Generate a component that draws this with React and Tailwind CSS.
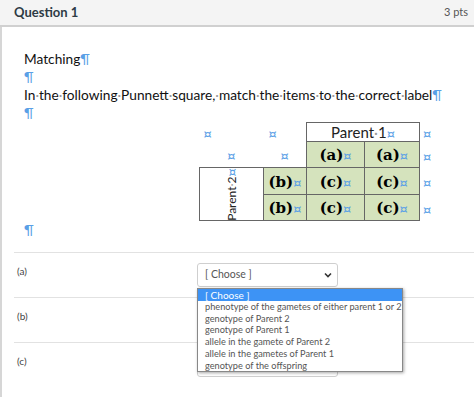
import React from 'react';

const mark = 'text-[#5aa0e6]';

function Dotted({ text }) {
    // Word formatting marks: spaces shown as middle dots
    const parts = text.split(' ');
    return (
        <>
            {parts.map((p, i) => (
                <React.Fragment key={i}>
                    {p}
                    {i < parts.length - 1 && <span className="text-[#999]">·</span>}
                </React.Fragment>
            ))}
        </>
    );
}

function Cur() {
    return <span className={`${mark} text-[13px] font-normal font-['DejaVu_Sans',sans-serif]`}>¤</span>;
}

function Label({ t }) {
    return (
        <span className="font-['DejaVu_Serif',serif] font-bold text-[15px] text-black">
            ({t})<Cur />
        </span>
    );
}

function Punnett() {
    const green = 'bg-[#d5e3bd] border border-[#666] text-center align-middle p-0';
    return (
        <div className="flex ml-[197px] leading-none">
            <table className="border-collapse table-fixed" style={{ width: 234 }}>
                <colgroup>
                    <col className="w-[64px]" />
                    <col className="w-[43px]" />
                    <col className="w-[58px]" />
                    <col className="w-[55px]" />
                    <col className="w-[14px]" />
                </colgroup>
                <tbody>
                    <tr className="h-[19px]">
                        <td className="pl-[4px] align-middle p-0"><Cur /></td>
                        <td className="pl-[5px] align-middle p-0"><Cur /></td>
                        <td colSpan={2} className="border border-[#666] text-center align-middle p-0 text-[15px] font-['Lato',sans-serif] text-[#222]">
                            Parent<span className="text-[#999]">·</span>1<Cur />
                        </td>
                        <td className="pl-[3px] p-0"><Cur /></td>
                    </tr>
                    <tr className="h-[26px]">
                        <td className="text-center p-0"><Cur /></td>
                        <td className="text-center p-0"><Cur /></td>
                        <td className={green}><Label t="a" /></td>
                        <td className={green}><Label t="a" /></td>
                        <td className="pl-[3px] p-0"><Cur /></td>
                    </tr>
                    <tr className="h-[27px]">
                        <td rowSpan={2} className="border border-[#666] bg-white p-0">
                            <div className="h-[52px] flex items-center justify-center">
                                <span className="-rotate-90 whitespace-nowrap text-[12px] font-['Lato',sans-serif] text-[#222]">
                                    Parent<span className="text-[#999]">·</span>2<Cur />
                                </span>
                            </div>
                        </td>
                        <td className={green}><Label t="b" /></td>
                        <td className={green}><Label t="c" /></td>
                        <td className={green}><Label t="c" /></td>
                        <td className="pl-[3px] p-0"><Cur /></td>
                    </tr>
                    <tr className="h-[26px]">
                        <td className={green}><Label t="b" /></td>
                        <td className={green}><Label t="c" /></td>
                        <td className={green}><Label t="c" /></td>
                        <td className="pl-[3px] p-0"><Cur /></td>
                    </tr>
                </tbody>
            </table>
        </div>
    );
}

const options = [
    'phenotype of the gametes of either parent 1 or 2',
    'genotype of Parent 2',
    'genotype of Parent 1',
    'allele in the gamete of Parent 2',
    'allele in the gametes of Parent 1',
    'genotype of the offspring',
];

function SelectBox() {
    return (
        <div className="w-[141px] h-[24px] border border-[#cfcfcf] rounded-[3px] bg-white flex items-center justify-between pl-[7px] pr-[5px] text-[10.5px] text-[#555]">
            <span>[ Choose ]</span>
            <svg width="8" height="6" viewBox="0 0 8 6">
                <path d="M1 1.5 L4 4.5 L7 1.5" fill="none" stroke="#333" strokeWidth="1.6" />
            </svg>
        </div>
    );
}

function AnswerRow({ label, open }) {
    return (
        <div className="border-t border-[#e2e2e2] h-[45px] flex">
            <div className="w-[183px] pl-[3px] pt-[11px] text-[10px] text-[#444]">{label}</div>
            <div className="relative pt-[10px]">
                <SelectBox />
                {open && (
                    <div className="absolute left-0 top-[35px] w-[206px] bg-white border border-[#888] shadow-[1px_1px_3px_rgba(0,0,0,0.35)] z-10 text-[9.2px] leading-[11.7px] text-[#555]">
                        <div className="bg-[#3d93f5] text-white pl-[7px] h-[12px] text-[10px] leading-[12px]">[ Choose ]</div>
                        {options.map(o => (
                            <div key={o} className="pl-[7px] whitespace-nowrap">{o}</div>
                        ))}
                    </div>
                )}
            </div>
        </div>
    );
}

export default function App() {
    return (
        <div className="w-[474px] h-[399px] overflow-hidden bg-white font-['Lato',sans-serif]">
            <div className="h-[27px] bg-[#f4f4f4] border-b-2 border-[#d0d0d0] flex items-center justify-between pl-[14px] pr-[6px]">
                <span className="text-[13px] font-bold text-[#2d3b45]">Question 1</span>
                <span className="text-[11px] text-[#555]">3 pts</span>
            </div>
            <div className="border-l-2 border-[#d6d6d6] h-[370px]">
                <div className="pl-[22px] pt-[23px] text-[13.7px] leading-[18px] text-[#111]">
                    <div>Matching<span className={mark}>¶</span></div>
                    <div className={mark}>¶</div>
                    <div>
                        <Dotted text="In the following Punnett square, match the items to the correct label" />
                        <span className={mark}>¶</span>
                    </div>
                    <div className={mark}>¶</div>
                </div>
                <Punnett />
                <div className="pl-[22px] text-[14px] leading-[18px]">
                    <div className={mark}>¶</div>
                </div>
                <div className="ml-[12px] mt-[13px]">
                    <AnswerRow label="(a)" open />
                    <AnswerRow label="(b)" />
                    <AnswerRow label="(c)" />
                </div>
            </div>
        </div>
    );
}
